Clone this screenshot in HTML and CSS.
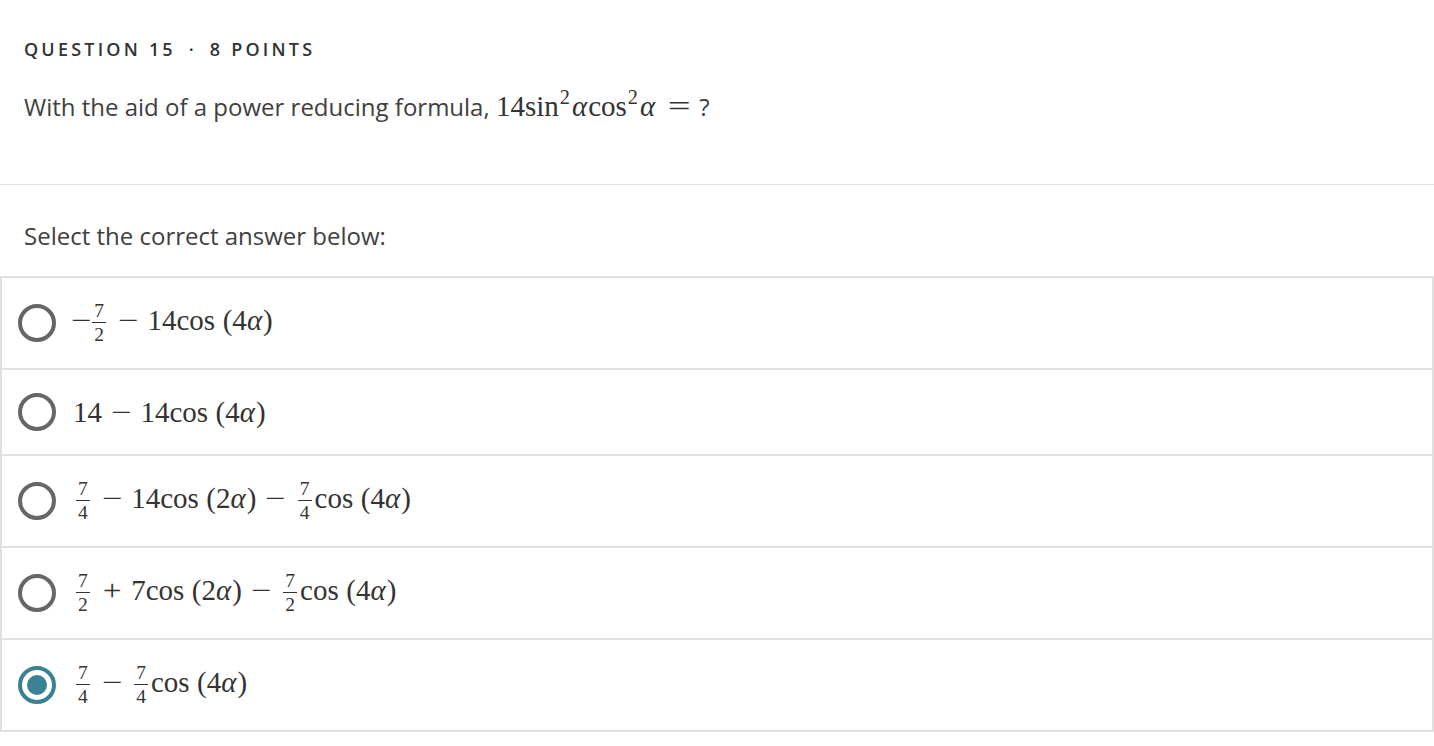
FILE: index.html
```html
<!DOCTYPE html>
<html>
<head>
<meta charset="utf-8">
<link rel="stylesheet" href="styles.css">
</head>
<body>
<div class="question">
  <div class="meta">QUESTION 15 <span class="dot">·</span> 8 POINTS</div>
  <div class="stem">With the aid of a power reducing formula, <span class="math">14sin<sup>2</sup><i>α</i>cos<sup>2</sup><i>α</i><span class="rel">=</span></span>?</div>
</div>
<div class="prompt">Select the correct answer below:</div>
<div class="options">
  <div class="option">
    <span class="radio"></span>
    <span class="math"><span class="op">−</span><span class="frac"><span class="num">7</span><span class="den">2</span></span><span class="bin"><span class="op">−</span></span>14cos<span class="th"></span>(4<i>α</i>)</span>
  </div>
  <div class="option">
    <span class="radio"></span>
    <span class="math">14<span class="bin"><span class="op">−</span></span>14cos<span class="th"></span>(4<i>α</i>)</span>
  </div>
  <div class="option">
    <span class="radio"></span>
    <span class="math"><span class="frac"><span class="num">7</span><span class="den">4</span></span><span class="bin"><span class="op">−</span></span>14cos<span class="th"></span>(2<i>α</i>)<span class="bin"><span class="op">−</span></span><span class="frac"><span class="num">7</span><span class="den">4</span></span>cos<span class="th"></span>(4<i>α</i>)</span>
  </div>
  <div class="option">
    <span class="radio"></span>
    <span class="math"><span class="frac"><span class="num">7</span><span class="den">2</span></span><span class="bin"><span class="op plus">+</span></span>7cos<span class="th"></span>(2<i>α</i>)<span class="bin"><span class="op">−</span></span><span class="frac"><span class="num">7</span><span class="den">2</span></span>cos<span class="th"></span>(4<i>α</i>)</span>
  </div>
  <div class="option">
    <span class="radio checked"></span>
    <span class="math"><span class="frac"><span class="num">7</span><span class="den">4</span></span><span class="bin"><span class="op">−</span></span><span class="frac"><span class="num">7</span><span class="den">4</span></span>cos<span class="th"></span>(4<i>α</i>)</span>
  </div>
</div>
</body>
</html>
```
FILE: styles.css
```css
body {
  margin: 0;
  background: #fff;
  font-family: "Open Sans", "Liberation Sans", sans-serif;
  color: #404040;
}
.question {
  padding: 37px 24px 0;
  height: 147px;
  border-bottom: 1px solid #e3e3e3;
}
.meta {
  font-size: 18px;
  font-weight: 600;
  letter-spacing: 3.2px;
  line-height: 24px;
  color: #333;
}
.dot {
  margin: 0 5px;
}
.stem {
  margin-top: 29px;
  font-size: 24px;
  line-height: 32px;
}
.math {
  font-family: "Liberation Serif", "Times New Roman", serif;
  font-size: 29px;
  color: #333;
  white-space: nowrap;
}
.math i {
  font-style: italic;
  margin-right: 1px;
}
.math sup {
  font-size: 0.7em;
  line-height: 0;
  vertical-align: 0.6em;
  margin: 0 2px 0 1px;
}
.rel {
  display: inline-block;
  transform: scaleX(1.4);
  margin: 0 0.42em 0 0.5em;
}
.bin {
  margin: 0 0.38em;
}
.op {
  display: inline-block;
  transform: scaleX(1.25);
}
.op.plus {
  transform: scaleX(1.15);
}
.th {
  display: inline-block;
  width: 0.26em;
}
.prompt {
  font-size: 24px;
  line-height: 32px;
  padding: 35px 24px 0;
  height: 56px;
}
.options {
  display: flex;
  flex-direction: column;
}
.option {
  display: flex;
  align-items: center;
  gap: 17px;
  padding: 23px 16px;
  border: 2px solid #e0e0e0;
  border-bottom: none;
  min-height: 38px;
}
.option:last-child {
  border-bottom: 2px solid #e0e0e0;
}
.radio {
  width: 30px;
  height: 30px;
  border: 4px solid #666;
  border-radius: 50%;
  flex: none;
  position: relative;
}
.radio.checked {
  border-color: #3a8191;
}
.radio.checked::after {
  content: "";
  position: absolute;
  left: 5px;
  top: 5px;
  width: 20px;
  height: 20px;
  border-radius: 50%;
  background: #3a8191;
}
.frac {
  display: inline-flex;
  flex-direction: column;
  align-items: center;
  vertical-align: middle;
  font-family: "Liberation Serif", "Times New Roman", serif;
  font-size: 19.5px;
  line-height: 20px;
  margin: 0 3px;
}
.num {
  padding: 0 2px 1px;
  border-bottom: 1px solid #333;
}
.den {
  padding-top: 2px;
}
```
